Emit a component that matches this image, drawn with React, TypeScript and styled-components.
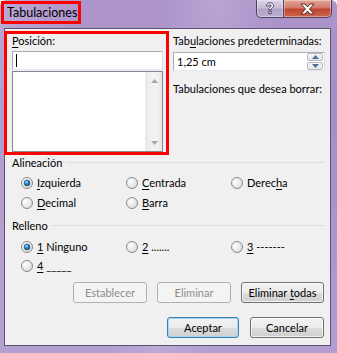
import React from "react";
import styled, { createGlobalStyle } from "styled-components";

const GlobalStyle = createGlobalStyle`
  html, body {
    margin: 0;
    padding: 0;
    background: #ffffff;
  }
  * {
    box-sizing: border-box;
  }
`;

const Window = styled.div`
  width: 337px;
  height: 353px;
  display: flex;
  flex-direction: column;
  padding: 0 6px 7px 4px;
  font-family: "Lato", "Open Sans", sans-serif;
  font-size: 11px;
  color: #000;
  background:
    linear-gradient(100deg, rgba(255,255,255,0.18) 0%, rgba(255,255,255,0) 22%, rgba(255,255,255,0) 40%, rgba(255,255,255,0.14) 55%, rgba(255,255,255,0) 70%),
    linear-gradient(180deg, #ad95cb 0%, #a78dc6 30%, #b29cd0 100%);
  border-radius: 6px 6px 0 0;
`;

const TitleBar = styled.div`
  height: 28px;
  display: flex;
  align-items: flex-start;
  justify-content: space-between;
`;

const TitleText = styled.div`
  margin: 1px 0 0 -3px;
  width: 80px;
  height: 23px;
  border: 3px solid #ff0000;
  padding-left: 3px;
  font-size: 12.5px;
  line-height: 17px;
  color: #000;
`;

const Controls = styled.div`
  display: flex;
  margin-right: -1px;
`;

const CaptionButton = styled.div<{ $close?: boolean }>`
  width: ${(p) => (p.$close ? "48px" : "28px")};
  height: 18px;
  display: flex;
  align-items: center;
  justify-content: center;
  border: 1px solid #4e4260;
  border-top: none;
  border-left: ${(p) => (p.$close ? "none" : "1px solid #4e4260")};
  border-radius: ${(p) => (p.$close ? "0 0 5px 0" : "0 0 0 5px")};
  background: ${(p) =>
    p.$close
      ? "linear-gradient(180deg, #e4a597 0%, #d47a6b 45%, #c0432f 55%, #cc6a52 100%)"
      : "linear-gradient(180deg, #ddd3e8 0%, #c9bcd9 45%, #b3a3c6 55%, #bcaecd 100%)"};
  box-shadow: inset 0 0 0 1px rgba(255, 255, 255, 0.35);
`;

const Client = styled.div`
  flex: 1;
  display: flex;
  flex-direction: column;
  background: #f0f0f0;
  border: 1px solid #5c5470;
  padding: 0 5px 0 0;
`;

const TopSection = styled.div`
  height: 126px;
  display: flex;
  align-items: flex-start;
`;

// red annotation frame around the "Posición" block
const Highlight = styled.div`
  margin: 2px 0 0 -1px;
  width: 165px;
  height: 124px;
  border: 3px solid #ff0000;
  padding: 0 3px 0 5px;
  display: flex;
  flex-direction: column;
  overflow: hidden;
`;

const Label = styled.div<{ $top?: number; $gap?: number }>`
  line-height: 14px;
  height: 14px;
  white-space: nowrap;
  margin-top: ${(p) => p.$top ?? 0}px;
  margin-bottom: ${(p) => p.$gap ?? 0}px;
`;

const Key = styled.span`
  text-decoration: underline;
  text-underline-offset: 2px;
`;

const TextInput = styled.div`
  height: 19px;
  width: 151px;
  background: #fff;
  border: 1px solid #abadb3;
  border-bottom-color: #e3e9ef;
  border-right-color: #dbdfe6;
  display: flex;
  align-items: center;
  padding-left: 3px;
`;

const Caret = styled.div`
  width: 1px;
  height: 13px;
  background: #000;
`;

const ListBox = styled.div`
  width: 151px;
  height: 81px;
  margin-top: 1px;
  background: #fff;
  border: 1px solid #828790;
  display: flex;
  justify-content: flex-end;
  flex-shrink: 0;
`;

const ScrollTrack = styled.div`
  width: 17px;
  display: flex;
  flex-direction: column;
  justify-content: space-between;
  align-items: center;
  background: linear-gradient(90deg, #e8e8e8 0%, #f2f2f2 30%, #f2f2f2 70%, #e6e6e6 100%);
  border-left: 1px solid #ececec;
  padding: 7px 0 6px;
`;

const RightColumn = styled.div`
  margin: 5px 0 0 4px;
  width: 152px;
  display: flex;
  flex-direction: column;
`;

const SpinBox = styled.div`
  margin-top: 4px;
  height: 19px;
  width: 152px;
  background: #fff;
  border: 1px solid #abadb3;
  border-bottom-color: #e3e9ef;
  border-right-color: #dbdfe6;
  display: flex;
  align-items: center;
  justify-content: space-between;
  padding: 0 1px 0 3px;
`;

const SpinButtons = styled.div`
  width: 16px;
  height: 17px;
  display: flex;
  flex-direction: column;
  gap: 1px;
`;

const SpinButton = styled.div`
  flex: 1;
  display: flex;
  align-items: center;
  justify-content: center;
  border: 1px solid #b5b9c2;
  border-radius: 2px;
  background: linear-gradient(180deg, #f6f6f6 0%, #e6e6e6 100%);
`;

const Group = styled.div<{ $top: number }>`
  margin-top: ${(p) => p.$top}px;
  padding-left: 7px;
`;

const GroupHeader = styled.div`
  display: flex;
  align-items: center;
  height: 14px;
  line-height: 14px;
`;

const HeaderRule = styled.div`
  flex: 1;
  height: 1px;
  margin-left: 4px;
  margin-top: -1px;
  background: #d5dfe5;
`;

const OptionGrid = styled.div<{ $top: number }>`
  margin-top: ${(p) => p.$top}px;
  padding-left: 9px;
  display: grid;
  grid-template-columns: 105px 105px 1fr;
  grid-auto-rows: 14px;
  row-gap: 5.5px;
`;

const Option = styled.div`
  display: flex;
  align-items: center;
  gap: 4px;
  line-height: 14px;
  white-space: nowrap;
`;

const ButtonRow = styled.div<{ $top: number; $gap: number }>`
  margin-top: ${(p) => p.$top}px;
  display: flex;
  justify-content: flex-end;
  gap: ${(p) => p.$gap}px;
  padding-right: 1px;
`;

const Button = styled.div<{ $width: number; $disabled?: boolean; $default?: boolean }>`
  width: ${(p) => p.$width}px;
  height: 21px;
  display: flex;
  align-items: center;
  justify-content: center;
  white-space: pre;
  border-radius: 3px;
  border: 1px solid ${(p) => (p.$disabled ? "#adb2b5" : p.$default ? "#3c7fb1" : "#707070")};
  color: ${(p) => (p.$disabled ? "#8d8d8d" : "#000")};
  background: ${(p) =>
    p.$disabled
      ? "#f4f4f4"
      : "linear-gradient(180deg, #f2f2f2 0%, #ebebeb 50%, #dddddd 50%, #cfcfcf 100%)"};
  box-shadow: ${(p) =>
    p.$disabled
      ? "none"
      : p.$default
      ? "inset 0 0 0 1px #a6d7f2"
      : "inset 0 0 0 1px rgba(255,255,255,0.7)"};
`;

const Radio: React.FC<{ checked?: boolean }> = ({ checked }) => (
  <svg width="12" height="12" viewBox="0 0 12 12">
    <defs>
      <radialGradient id="rbg" cx="0.35" cy="0.35" r="0.8">
        <stop offset="0" stopColor="#ffffff" />
        <stop offset="1" stopColor="#d6d6d6" />
      </radialGradient>
      <radialGradient id="rdot" cx="0.4" cy="0.35" r="0.7">
        <stop offset="0" stopColor="#8fe0fb" />
        <stop offset="0.45" stopColor="#2b8cc4" />
        <stop offset="1" stopColor="#16486e" />
      </radialGradient>
    </defs>
    <circle cx="6" cy="6" r="5.5" fill="url(#rbg)" stroke="#8b8b8b" strokeWidth="1" />
    {checked && <circle cx="6" cy="6" r="3" fill="url(#rdot)" stroke="#1d4f75" strokeWidth="0.6" />}
  </svg>
);

const Arrow: React.FC<{ down?: boolean; color: string }> = ({ down, color }) => (
  <svg width="7" height="4" viewBox="0 0 7 4">
    <path d={down ? "M0 0 L7 0 L3.5 4 Z" : "M0 4 L7 4 L3.5 0 Z"} fill={color} />
  </svg>
);

const HelpGlyph = () => (
  <svg width="10" height="13" viewBox="0 0 10 13">
    <path
      d="M1.5 4 C1.5 1.5 3 0.8 5 0.8 C7.3 0.8 8.6 2 8.6 3.8 C8.6 5.6 6.2 6 6.2 7.8 L3.8 7.8 C3.8 5.2 6.2 5 6.2 3.9 C6.2 3.2 5.7 2.8 5 2.8 C4.3 2.8 3.8 3.3 3.8 4 Z M3.8 9.2 H6.2 V11.6 H3.8 Z"
      fill="#ffffff"
      stroke="#3b3350"
      strokeWidth="0.9"
      strokeLinejoin="round"
    />
  </svg>
);

const CloseGlyph = () => (
  <svg width="15" height="12" viewBox="0 0 15 12">
    <path
      d="M1 1 H5 L7.5 4 L10 1 H14 L9.5 6 L14 11 H10 L7.5 8 L5 11 H1 L5.5 6 Z"
      fill="#ffffff"
      stroke="#4a1f1a"
      strokeWidth="0.9"
      strokeLinejoin="round"
    />
  </svg>
);

const App: React.FC = () => {
  return (
    <>
      <GlobalStyle />
      <Window>
        <TitleBar>
          <TitleText>Tabulaciones</TitleText>
          <Controls>
            <CaptionButton>
              <HelpGlyph />
            </CaptionButton>
            <CaptionButton $close>
              <CloseGlyph />
            </CaptionButton>
          </Controls>
        </TitleBar>
        <Client>
          <TopSection>
            <Highlight>
              <Label $gap={3}>
                <Key>P</Key>osición:
              </Label>
              <TextInput>
                <Caret />
              </TextInput>
              <ListBox>
                <ScrollTrack>
                  <Arrow color="#a9a9a9" />
                  <Arrow down color="#a9a9a9" />
                </ScrollTrack>
              </ListBox>
            </Highlight>
            <RightColumn>
              <Label>
                Tab<Key>u</Key>laciones predeterminadas:
              </Label>
              <SpinBox>
                <span>1,25 cm</span>
                <SpinButtons>
                  <SpinButton>
                    <Arrow color="#4f6d9c" />
                  </SpinButton>
                  <SpinButton>
                    <Arrow down color="#4f6d9c" />
                  </SpinButton>
                </SpinButtons>
              </SpinBox>
              <Label $top={11}>Tabulaciones que desea borrar:</Label>
            </RightColumn>
          </TopSection>

          <Group $top={1}>
            <GroupHeader>
              Alineación
              <HeaderRule />
            </GroupHeader>
            <OptionGrid $top={6}>
              <Option>
                <Radio checked />
                <span><Key>I</Key>zquierda</span>
              </Option>
              <Option>
                <Radio />
                <span><Key>C</Key>entrada</span>
              </Option>
              <Option>
                <Radio />
                <span>Derec<Key>h</Key>a</span>
              </Option>
              <Option>
                <Radio />
                <span><Key>D</Key>ecimal</span>
              </Option>
              <Option>
                <Radio />
                <span><Key>B</Key>arra</span>
              </Option>
            </OptionGrid>
          </Group>

          <Group $top={9}>
            <GroupHeader>
              Relleno
              <HeaderRule />
            </GroupHeader>
            <OptionGrid $top={7}>
              <Option>
                <Radio checked />
                <span><Key>1</Key> Ninguno</span>
              </Option>
              <Option>
                <Radio />
                <span><Key>2</Key> .......</span>
              </Option>
              <Option>
                <Radio />
                <span><Key>3</Key> -------</span>
              </Option>
              <Option>
                <Radio />
                <span><Key>4</Key> _____</span>
              </Option>
            </OptionGrid>
          </Group>

          <ButtonRow $top={9} $gap={10}>
            <Button $width={74} $disabled>Establecer</Button>
            <Button $width={74} $disabled>Eliminar</Button>
            <Button $width={83}>
              <span>Eliminar <Key>t</Key>odas</span>
            </Button>
          </ButtonRow>
          <ButtonRow $top={14} $gap={11}>
            <Button $width={72} $default>Aceptar</Button>
            <Button $width={74}>Cancelar</Button>
          </ButtonRow>
        </Client>
      </Window>
    </>
  );
};

export default App;
